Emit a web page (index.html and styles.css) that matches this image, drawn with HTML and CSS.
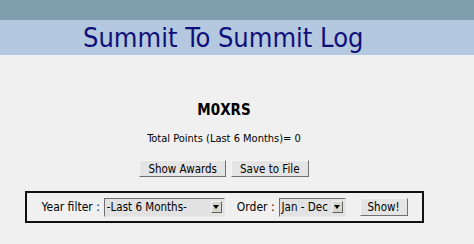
FILE: index.html
```html
<!DOCTYPE html>
<html lang="en">
<head>
  <meta charset="UTF-8">
  <title>Summit To Summit Log</title>
  <link rel="stylesheet" href="styles.css">
</head>
<body>
  <div class="top-bar"></div>
  <header class="title-bar">
    <h1>Summit To Summit Log</h1>
  </header>
  <div class="content">
    <h2 class="callsign">M0XRS</h2>
    <p class="points">Total Points (Last 6 Months)= 0</p>
    <div class="actions">
      <button class="btn">Show Awards</button>
      <button class="btn">Save to File</button>
    </div>
    <div class="filter-box">
      <label>Year filter :</label>
      <div class="select wide"><span>-Last 6 Months-</span><i class="arrow"></i></div>
      <label class="order-label">Order :</label>
      <div class="select"><span>Jan - Dec</span><i class="arrow"></i></div>
      <button class="btn show-btn">Show!</button>
    </div>
  </div>
</body>
</html>
```

FILE: styles.css
```css
body, html {
  margin: 0;
  padding: 0;
  font-family: "DejaVu Sans Condensed", "DejaVu Sans", sans-serif;
  background-color: #f0f0f0;
  color: #000;
}
.top-bar {
  height: 20px;
  background-color: #7f9fae;
}
.title-bar {
  height: 35px;
  background-color: #b4c8df;
}
.title-bar h1 {
  margin: 0;
  padding-left: 83px;
  font-weight: normal;
  font-size: 27px;
  line-height: 35px;
  color: #10107a;
}
.content {
  width: 448px;
  display: flex;
  flex-direction: column;
  align-items: center;
  padding-top: 46px;
}
.callsign {
  margin: 0;
  font-size: 15px;
  line-height: 18px;
}
.points {
  margin: 13px 0 0;
  font-size: 11px;
  line-height: 14px;
}
.actions {
  display: flex;
  gap: 5px;
  margin-top: 14px;
}
.btn {
  font-family: inherit;
  font-size: 11.5px;
  color: #000;
  background: #e4e4e4;
  border: 1px solid #f4f4f4;
  border-right-color: #707070;
  border-bottom-color: #707070;
  padding: 0 8px;
  height: 17px;
  line-height: 14px;
  white-space: nowrap;
}
.filter-box {
  display: flex;
  align-items: center;
  margin-top: 14px;
  width: 399px;
  height: 32px;
  padding-left: 15px;
  box-sizing: border-box;
  border: 2px solid #111;
  font-size: 12px;
}
.filter-box label {
  margin-right: 4px;
  white-space: nowrap;
}
.order-label {
  margin-left: 12px;
}
.select {
  display: flex;
  align-items: center;
  justify-content: space-between;
  height: 19px;
  width: 67px;
  box-sizing: border-box;
  border: 1px solid #707070;
  border-right-color: #e8e8e8;
  border-bottom-color: #e8e8e8;
  background: #e2e2e2;
  padding-left: 2px;
  font-size: 11.5px;
  white-space: nowrap;
}
.select.wide {
  width: 121px;
}
.arrow {
  display: block;
  flex: none;
  width: 11px;
  height: 12px;
  margin-right: 2px;
  background: #d6d6ce;
  border: 1px solid #f4f4f4;
  border-right-color: #606060;
  border-bottom-color: #606060;
  box-sizing: border-box;
  position: relative;
}
.arrow::after {
  content: "";
  position: absolute;
  left: 1px;
  top: 3px;
  border-left: 3px solid transparent;
  border-right: 3px solid transparent;
  border-top: 4px solid #000;
}
.show-btn {
  margin-left: 14px;
  width: 48px;
  height: 18px;
  padding: 0;
}
```
